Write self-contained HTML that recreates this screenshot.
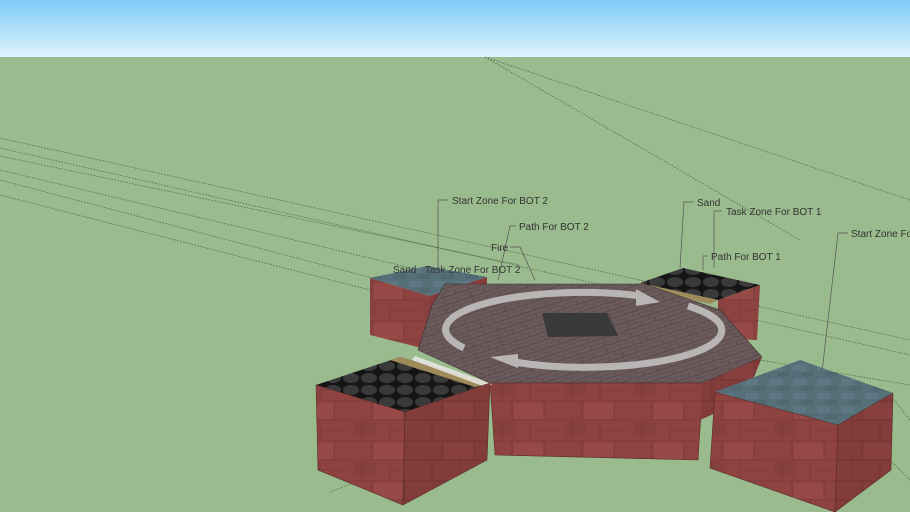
<!DOCTYPE html>
<html><head><meta charset="utf-8"><style>
html,body{margin:0;padding:0;width:910px;height:512px;overflow:hidden;background:#9abb8e}
svg{display:block}
text{font-family:"Liberation Sans",sans-serif;font-size:10px;fill:#333}
</style></head><body>
<svg width="910" height="512" viewBox="0 0 910 512" xmlns="http://www.w3.org/2000/svg">
<defs>
<linearGradient id="sky" x1="0" y1="0" x2="0" y2="1"><stop offset="0" stop-color="#7ecbf8"/><stop offset="1" stop-color="#dff3fc"/></linearGradient>
<pattern id="brick" width="70" height="40" patternUnits="userSpaceOnUse"><rect width="70" height="40" fill="#8f4341"/><rect x="24" y="3" width="30" height="16" fill="#964946"/><rect x="4" y="22" width="22" height="14" fill="#86403e"/><path d="M0 1H70M0 20H70M22 1V20M54 1V20M12 20V40M40 20V40M40 30H70" stroke="#6a3333" stroke-width="0.6" fill="none"/></pattern>
<pattern id="brick2" width="70" height="40" patternUnits="userSpaceOnUse"><rect width="70" height="40" fill="#823c3a"/><rect x="24" y="3" width="30" height="16" fill="#88403e"/><path d="M0 1H70M0 20H70M22 1V20M54 1V20M12 20V40M40 20V40" stroke="#5e2e2e" stroke-width="0.6" fill="none"/></pattern>
<pattern id="pave" width="14" height="8" patternUnits="userSpaceOnUse" patternTransform="rotate(-18)"><rect width="14" height="8" fill="#6b5a5b"/><path d="M0 4H14M0 8H14M7 0V4M0 4V8" stroke="#544647" stroke-width="0.7"/></pattern>
<pattern id="cob" width="18" height="12" patternUnits="userSpaceOnUse"><rect width="18" height="12" fill="#151515"/><ellipse cx="9" cy="6" rx="8" ry="5" fill="#3a3a3a"/></pattern>
<pattern id="tile" width="24" height="14" patternUnits="userSpaceOnUse"><rect width="24" height="14" fill="#56707a"/><rect x="1" y="1" width="13" height="6" fill="#5d7883"/><rect x="9" y="8" width="13" height="5" fill="#506870"/></pattern>
</defs>
<rect width="910" height="57" fill="url(#sky)"/>
<rect y="57" width="910" height="455" fill="#9abb8e"/>
<g stroke="#4a5a48" stroke-width="0.7" stroke-dasharray="1.5 1.5" fill="none">
<path d="M485 57L910 200M485 57L800 240M0 138L910 340M0 148L910 355M0 156L520 265M0 170L420 270M0 180L380 280M0 195L370 290M760 360L910 385M890 395L910 420M890 460L910 480M330 492L360 480"/>
</g>
<polygon points="370,278 430,296 430,350 370,335" fill="url(#brick)"/>
<polygon points="370,278 427,266 487,277 430,296" fill="url(#tile)"/>
<polygon points="430,296 487,277 487,330 430,350" fill="#8a3a38"/>
<polygon points="640,283 683,268 760,285 718,300" fill="url(#cob)"/>
<polygon points="640,283 718,300 710,304 645,288" fill="#a08a5a"/>
<polygon points="718,300 760,285 757,340 718,338" fill="url(#brick)"/>
<polygon points="445,284 645,284 720,310 762,357 703,383 490,383 418,350 432,305" fill="url(#pave)" stroke="#3a3030" stroke-width="0.6"/>
<polygon points="490,383 703,383 698,460 495,455" fill="url(#brick)" stroke="#5a2a2a" stroke-width="0.6"/>
<polygon points="703,383 762,357 745,400 700,420" fill="url(#brick2)"/>
<g fill="none" stroke="#b9b5b5" stroke-width="7">
<path d="M464 348 A137 37 0 0 1 641 296"/>
<path d="M688 306 A137 37 0 0 1 514 362"/>
</g>
<polygon points="636,289 660,302 636,306" fill="#b9b5b5"/>
<polygon points="518,354 490,357 518,368" fill="#b9b5b5"/>
<polygon points="542,313 607,313 618,336 548,337" fill="#3a3a3c"/>
<polygon points="316,385 400,357 490,383 405,412" fill="url(#cob)"/>
<polygon points="400,357 490,383 475,387 390,360" fill="#a08a5a"/>
<polygon points="415,356 492,384 488,388 412,360" fill="#eee" opacity=".8"/>
<polygon points="316,385 405,412 403,505 318,470" fill="url(#brick)" stroke="#5a2a2a" stroke-width="0.6"/>
<polygon points="405,412 490,383 487,460 403,505" fill="url(#brick2)" stroke="#5a2a2a" stroke-width="0.6"/>
<polygon points="715,392 800,360 893,393 838,425" fill="url(#tile)"/>
<polygon points="715,392 838,425 835,512 710,468" fill="url(#brick)" stroke="#5a2a2a" stroke-width="0.6"/>
<polygon points="838,425 893,393 891,470 835,512" fill="url(#brick2)" stroke="#5a2a2a" stroke-width="0.6"/>
<g stroke="#555" stroke-width="0.7" fill="none">
<path d="M448 200H438V270M516 226H510L498 280M510 247H520L535 280M694 202H684L680 268M722 211H714V268M708 256H703V270M848 233H838L822 372"/>
</g>
<text x="452" y="204">Start Zone For BOT 2</text>
<text x="519" y="230">Path For BOT 2</text>
<text x="491" y="251">Fire</text>
<text x="393" y="273">Sand</text>
<text x="425" y="273">Task Zone For BOT 2</text>
<text x="697" y="206">Sand</text>
<text x="726" y="215">Task Zone For BOT 1</text>
<text x="711" y="260">Path For BOT 1</text>
<text x="851" y="237">Start Zone For</text>
</svg>
</body></html>
